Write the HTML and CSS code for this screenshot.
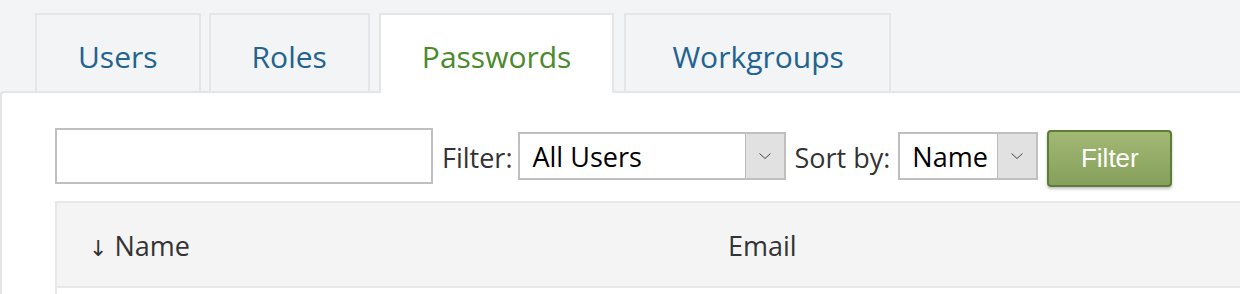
FILE: index.html
```html
<!DOCTYPE html>
<html lang="en">
<head>
    <meta charset="UTF-8">
    <title>Passwords</title>
    <link rel="stylesheet" href="styles.css">
</head>
<body>
<div class="tabs">
    <a class="tab" href="#">Users</a>
    <a class="tab" href="#">Roles</a>
    <a class="tab tab_active" href="#">Passwords</a>
    <a class="tab workgroups_tab" href="#">Workgroups</a>
</div>
<div class="panel">
    <div class="toolbar">
        <input class="search_input" type="text">
        <label class="toolbar_label" for="filterId">Filter:</label>
        <div class="select_box filter_select">
            <select id="filterId">
                <option>All Users</option>
            </select>
            <span class="select_arrow">
                <svg width="12" height="6" viewBox="0 0 12 6"><path d="M0.5 0.5 L6 5.5 L11.5 0.5" fill="none" stroke="#444" stroke-width="1"/></svg>
            </span>
        </div>
        <label class="toolbar_label" for="sortId">Sort by:</label>
        <div class="select_box sort_select">
            <select id="sortId">
                <option>Name</option>
            </select>
            <span class="select_arrow">
                <svg width="12" height="6" viewBox="0 0 12 6"><path d="M0.5 0.5 L6 5.5 L11.5 0.5" fill="none" stroke="#444" stroke-width="1"/></svg>
            </span>
        </div>
        <button class="filter_button">Filter</button>
    </div>
    <table class="users_tab">
        <thead>
        <tr>
            <th class="name_col"><span class="sort_arrow">&#8595;</span> Name</th>
            <th>Email</th>
        </tr>
        </thead>
        <tbody>
        <tr>
            <td colspan="2">&nbsp;</td>
        </tr>
        </tbody>
    </table>
</div>
</body>
</html>
```

FILE: styles.css
```css
body {
    margin: 0;
    background: #f3f4f6;
    font-family: "Open Sans", "Noto Sans", sans-serif;
    overflow: hidden;
}

.tabs {
    display: flex;
    gap: 8px;
    padding: 13px 0 0 35px;
}

.tab {
    box-sizing: border-box;
    height: 78px;
    padding: 21px 41px 0;
    border: 2px solid #e4e5e7;
    border-bottom: none;
    color: #22638f;
    font-size: 30px;
    text-decoration: none;
}

.tab_active {
    position: relative;
    z-index: 1;
    height: 80px;
    margin-left: 1px;
    margin-bottom: -2px;
    background: #fff;
    color: #4a8a2c;
}

.workgroups_tab {
    margin-left: 2px;
    padding: 21px 45px 0 46px;
}

.panel {
    height: 300px;
    padding: 35px 0 0 53px;
    background: #fff;
    border-top: 2px solid #e4e5e7;
    border-left: 2px solid #e4e5e7;
    border-top-left-radius: 4px;
}

.toolbar {
    display: flex;
    align-items: center;
    height: 56px;
}

.search_input {
    box-sizing: border-box;
    width: 378px;
    height: 56px;
    margin: 0 9px 0 0;
    border: 2px solid #bfbfbf;
    outline: none;
}

.toolbar_label {
    padding-top: 2px;
    margin-right: 6px;
    color: #333;
    font-size: 27px;
}

.select_box {
    box-sizing: border-box;
    display: flex;
    height: 48px;
    margin-right: 8px;
    border: 2px solid #bfbfbf;
    background: #fff;
}

.select_box select {
    flex: 1;
    min-width: 0;
    padding: 0 0 0 12px;
    border: none;
    background: transparent;
    color: #000;
    font-family: "Open Sans", "Noto Sans", sans-serif;
    font-size: 27px;
    appearance: none;
    outline: none;
}

.filter_select {
    width: 268px;
}

.sort_select {
    width: 140px;
    margin-left: 2px;
    margin-right: 9px;
}

.select_arrow {
    display: flex;
    align-items: center;
    justify-content: center;
    width: 38px;
    background: #e1e1e1;
    border-left: 1px solid #bcbcbc;
}

.filter_button {
    box-sizing: border-box;
    align-self: flex-end;
    width: 125px;
    height: 57px;
    margin-bottom: -3px;
    border: 2px solid #5c7d37;
    border-radius: 4px;
    background: linear-gradient(#a1b974, #869f5a);
    box-shadow: 0 2px 3px rgba(0, 0, 0, 0.25);
    color: #fff;
    font-family: "Liberation Sans", Arial, sans-serif;
    font-size: 26px;
}

.users_tab {
    width: 1300px;
    margin-top: 17px;
    border-collapse: collapse;
    border-left: 2px solid #e8e8e8;
}

.users_tab th {
    height: 81px;
    padding: 2px 0 0 32px;
    background: #f4f4f4;
    border-top: 2px solid #e8e8e8;
    border-bottom: 2px solid #e8e8e8;
    color: #333;
    font-size: 27px;
    font-weight: normal;
    text-align: left;
}

.name_col {
    width: 607px;
}

.sort_arrow {
    font-family: "DejaVu Sans", sans-serif;
    font-size: 22px;
}

.users_tab td {
    height: 40px;
}
```
